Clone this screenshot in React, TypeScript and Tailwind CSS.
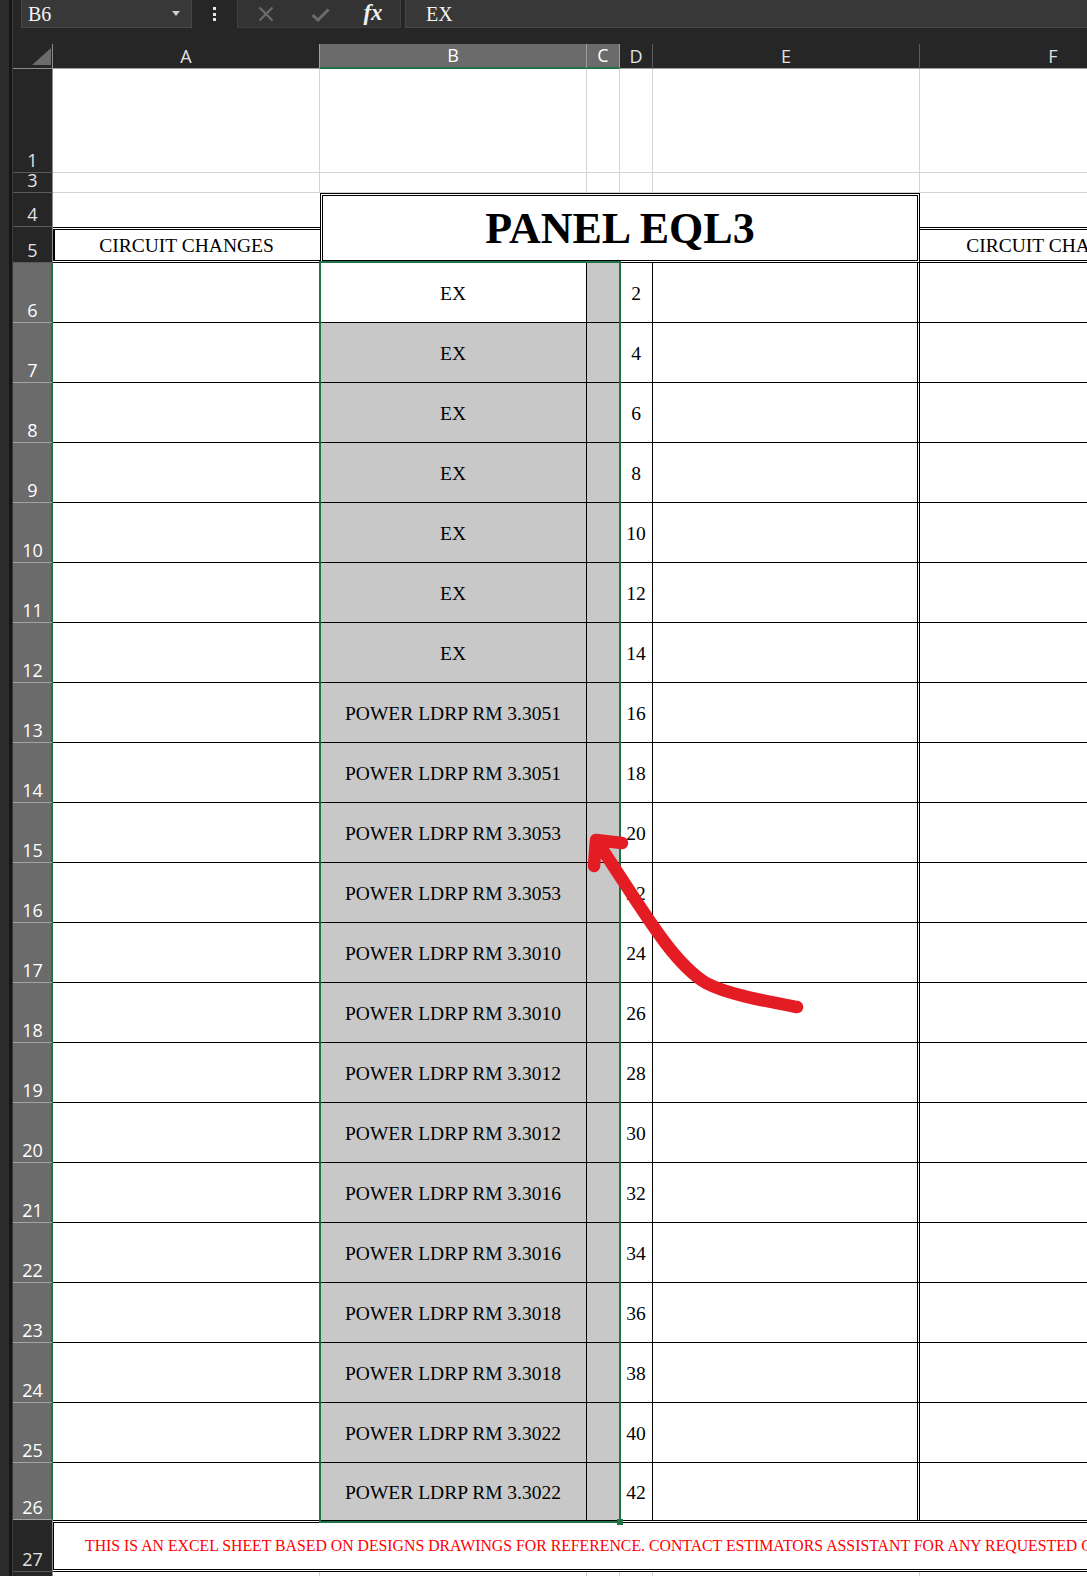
import React from "react";

const serif = "font-['Liberation_Serif','Times_New_Roman',serif]";
const sans = "font-['Open_Sans','Segoe_UI',sans-serif]";

type Row = { n: number; b: string; d: string };

const data: Row[] = [
  { n: 6, b: "EX", d: "2" },
  { n: 7, b: "EX", d: "4" },
  { n: 8, b: "EX", d: "6" },
  { n: 9, b: "EX", d: "8" },
  { n: 10, b: "EX", d: "10" },
  { n: 11, b: "EX", d: "12" },
  { n: 12, b: "EX", d: "14" },
  { n: 13, b: "POWER LDRP RM 3.3051", d: "16" },
  { n: 14, b: "POWER LDRP RM 3.3051", d: "18" },
  { n: 15, b: "POWER LDRP RM 3.3053", d: "20" },
  { n: 16, b: "POWER LDRP RM 3.3053", d: "22" },
  { n: 17, b: "POWER LDRP RM 3.3010", d: "24" },
  { n: 18, b: "POWER LDRP RM 3.3010", d: "26" },
  { n: 19, b: "POWER LDRP RM 3.3012", d: "28" },
  { n: 20, b: "POWER LDRP RM 3.3012", d: "30" },
  { n: 21, b: "POWER LDRP RM 3.3016", d: "32" },
  { n: 22, b: "POWER LDRP RM 3.3016", d: "34" },
  { n: 23, b: "POWER LDRP RM 3.3018", d: "36" },
  { n: 24, b: "POWER LDRP RM 3.3018", d: "38" },
  { n: 25, b: "POWER LDRP RM 3.3022", d: "40" },
  { n: 26, b: "POWER LDRP RM 3.3022", d: "42" },
];

function FormulaBar() {
  return (
    <div className="flex h-[28px] shrink-0 pl-[8px]">
      <div className="flex w-[171px] items-center justify-between bg-[#383838] border-x border-b border-[#474747] pl-[6px] pr-[11px]">
        <span className={serif + " text-[20px] leading-none text-[#f2f2f2]"}>B6</span>
        <svg width="8" height="5" viewBox="0 0 8 5">
          <path d="M0 0 H8 L4 5 Z" fill="#d0d0d0" />
        </svg>
      </div>
      <div className="flex w-[45px] flex-col items-center justify-center gap-[2.5px]">
        <div className="h-[3px] w-[3px] bg-[#e6e6e6]" />
        <div className="h-[3px] w-[3px] bg-[#e6e6e6]" />
        <div className="h-[3px] w-[3px] bg-[#e6e6e6]" />
      </div>
      <div className="flex w-[164px] items-center bg-[#333333] border-x border-b border-[#3f3f3f]">
        <div className="flex w-[56px] items-center justify-center">
          <svg width="16" height="16" viewBox="0 0 16 16">
            <path d="M1.5 1.5 L14.5 14.5 M14.5 1.5 L1.5 14.5" stroke="#6c6c6c" strokeWidth="2.2" />
          </svg>
        </div>
        <div className="flex w-[52px] items-center justify-center pt-[2px]">
          <svg width="19" height="14" viewBox="0 0 19 14">
            <path d="M1.5 7 L7 12 L17.5 1.5" stroke="#6c6c6c" strokeWidth="3" fill="none" />
          </svg>
        </div>
        <div className="flex w-[54px] items-center justify-center">
          <span className={serif + " text-[23px] font-bold italic leading-none text-[#f0f0f0] -mt-[2px]"}>fx</span>
        </div>
      </div>
      <div className="w-[4px]" />
      <div className="flex flex-1 items-center bg-[#383838] border-l border-b border-[#474747] pl-[20px]">
        <span className={serif + " text-[20px] leading-none text-[#f2f2f2]"}>EX</span>
      </div>
    </div>
  );
}

function RowHead({ n, sel }: { n: number; sel?: boolean }) {
  return (
    <div
      className={
        sel
          ? sans + " flex items-end justify-center pb-[3px] pl-[1px] text-[18px] leading-none text-white bg-[#6b6b6b] border-b border-b-[#a3a3a3] border-r-2 border-r-[#217346]"
          : sans + " flex items-end justify-center pb-[3px] text-[18px] leading-none text-[#e2e2e2] bg-[#262626] border-b border-b-[#5a5a5a] border-r border-r-[#8c8c8c]"
      }
    >
      {n}
    </div>
  );
}

function GridCell() {
  return <div className="bg-white border-r border-b border-[#d4d4d4]" />;
}

function Sheet() {
  return (
    <div className="relative grid w-max shrink-0 grid-cols-[40px_267px_267px_33px_33px_267px_267px] grid-rows-[25px_104px_20px_34px_36px_repeat(20,60px)_57px_52px_40px]">
      {/* column headers */}
      <div className="flex items-end justify-end bg-[#262626] border-r border-b border-[#8c8c8c] pb-[3px] pr-[1px]">
        <svg width="19" height="17" viewBox="0 0 19 17">
          <path d="M19 0 V17 H0 Z" fill="#6b6b6b" />
        </svg>
      </div>
      <div className={sans + " flex items-center justify-center text-[18px] text-[#e2e2e2] bg-[#262626] border-b border-b-[#a0a0a0] border-r border-r-[#a0a0a0]"}>A</div>
      <div className={sans + " flex items-center justify-center text-[18px] text-white bg-[#6b6b6b] border-b-2 border-b-[#217346] border-r border-r-[#9c9c9c]"}>B</div>
      <div className={sans + " flex items-center justify-center text-[18px] text-white bg-[#6b6b6b] border-b-2 border-b-[#217346] border-r border-r-[#9c9c9c]"}>C</div>
      <div className={sans + " flex items-center justify-center text-[18px] text-[#e2e2e2] bg-[#262626] border-b border-b-[#a0a0a0] border-r border-r-[#5c5c5c]"}>D</div>
      <div className={sans + " flex items-center justify-center text-[18px] text-[#e2e2e2] bg-[#262626] border-b border-b-[#a0a0a0] border-r border-r-[#5c5c5c]"}>E</div>
      <div className={sans + " flex items-center justify-center text-[18px] text-[#e2e2e2] bg-[#262626] border-b border-b-[#a0a0a0] border-r border-r-[#5c5c5c]"}>F</div>

      {/* row 1 */}
      <RowHead n={1} />
      <GridCell />
      <GridCell />
      <GridCell />
      <GridCell />
      <GridCell />
      <GridCell />

      {/* row 3 */}
      <RowHead n={3} />
      <GridCell />
      <GridCell />
      <GridCell />
      <GridCell />
      <GridCell />
      <GridCell />

      {/* row 4 */}
      <RowHead n={4} />
      <div className="bg-white" />
      <div className="col-span-4 row-span-2 flex items-center justify-center bg-white border-[3px] border-double border-black pt-[2px]">
        <span className={serif + " text-[44px] font-bold leading-none text-black"}>PANEL EQL3</span>
      </div>
      <div className="bg-white" />

      {/* row 5 */}
      <RowHead n={5} />
      <div className="flex items-center justify-center bg-white border-y-[3px] border-double border-black shadow-[inset_2px_0_0_#000] pt-[1px]">
        <span className={serif + " text-[19.5px] leading-none text-black"}>CIRCUIT CHANGES</span>
      </div>
      <div className="flex items-center justify-center bg-white border-y-[3px] border-double border-black pt-[1px]">
        <span className={serif + " text-[19.5px] leading-none text-black whitespace-nowrap"}>CIRCUIT CHANGES</span>
      </div>

      {/* data rows */}
      {data.map((r) => {
        const last = r.n === 26;
        const first = r.n === 6;
        return (
          <React.Fragment key={r.n}>
            <RowHead n={r.n} sel />
            <div className={last ? "bg-white border-r border-black" : "bg-white border-r border-b border-black"} />
            <div
              className={
                first
                  ? serif + " flex items-center justify-center whitespace-nowrap pt-[3px] text-[19.5px] text-black bg-white border-r border-b border-black"
                  : last
                  ? serif + " flex items-center justify-center whitespace-nowrap pt-[3px] text-[19.5px] text-black bg-[#c8c8c8] border-r border-black"
                  : serif + " flex items-center justify-center whitespace-nowrap pt-[3px] text-[19.5px] text-black bg-[#c8c8c8] border-r border-b border-black"
              }
            >
              {r.b}
            </div>
            <div className={last ? "bg-[#c8c8c8] border-r border-black" : "bg-[#c8c8c8] border-r border-b border-black"} />
            <div
              className={
                last
                  ? serif + " flex items-center justify-center pt-[3px] text-[19.5px] text-black bg-white border-r border-black"
                  : serif + " flex items-center justify-center pt-[3px] text-[19.5px] text-black bg-white border-r border-b border-black"
              }
            >
              {r.d}
            </div>
            <div
              className={
                last
                  ? "bg-white border-r-[3px] border-double border-black"
                  : "bg-white border-r-[3px] border-b border-double border-black [border-bottom-style:solid]"
              }
            />
            <div className={last ? "bg-white" : "bg-white border-b border-black"} />
          </React.Fragment>
        );
      })}

      {/* row 27 */}
      <RowHead n={27} />
      <div className="col-span-6 flex items-center overflow-hidden bg-white border-y-[3px] border-double border-black shadow-[inset_1px_0_0_#000] pl-[32px]">
        <span className={serif + " whitespace-nowrap text-[15.8px] leading-none text-[#ff0000]"}>
          THIS IS AN EXCEL SHEET BASED ON DESIGNS DRAWINGS FOR REFERENCE. CONTACT ESTIMATORS ASSISTANT FOR ANY REQUESTED CHANGES.
        </span>
      </div>

      {/* row 28 */}
      <RowHead n={28} />
      <div className="bg-white border-r border-[#d4d4d4]" />
      <div className="bg-white border-r border-[#d4d4d4]" />
      <div className="bg-white border-r border-[#d4d4d4]" />
      <div className="bg-white border-r border-[#d4d4d4]" />
      <div className="bg-white border-r border-[#d4d4d4]" />
      <div className="bg-white border-r border-[#d4d4d4]" />

      {/* selection outline over B6:C26 */}
      <div className="pointer-events-none absolute left-[306px] top-[217px] h-[1262px] w-[302px] border-2 border-[#217346]">
        <div className="absolute -bottom-[4px] -right-[4px] h-[6px] w-[6px] bg-[#217346]" />
      </div>
    </div>
  );
}

function Arrow() {
  return (
    <svg
      className="pointer-events-none absolute left-0 top-0"
      width="1087"
      height="1576"
      viewBox="0 0 1087 1576"
      fill="none"
    >
      <path
        d="M797 1007 C760 1000 727 994 706 983 C671 962 640 905 598 843"
        stroke="#e41d25"
        strokeWidth="12.5"
        strokeLinecap="round"
        strokeLinejoin="round"
      />
      <path
        d="M622 843 L596 840 L594 866"
        stroke="#e41d25"
        strokeWidth="12.5"
        strokeLinecap="round"
        strokeLinejoin="round"
      />
    </svg>
  );
}

export default function App() {
  return (
    <div className="relative flex h-[1576px] w-[1087px] overflow-hidden bg-[#262626]">
      <div className="flex shrink-0">
        <div className="w-[9px] bg-[#2c2c2c]" />
        <div className="w-[3px] bg-[#161616]" />
        <div className="w-[1px] bg-[#3a3a3a]" />
      </div>
      <div className="flex min-w-0 flex-1 flex-col overflow-hidden">
        <FormulaBar />
        <div className="h-[16px] shrink-0" />
        <Sheet />
      </div>
      <Arrow />
    </div>
  );
}
